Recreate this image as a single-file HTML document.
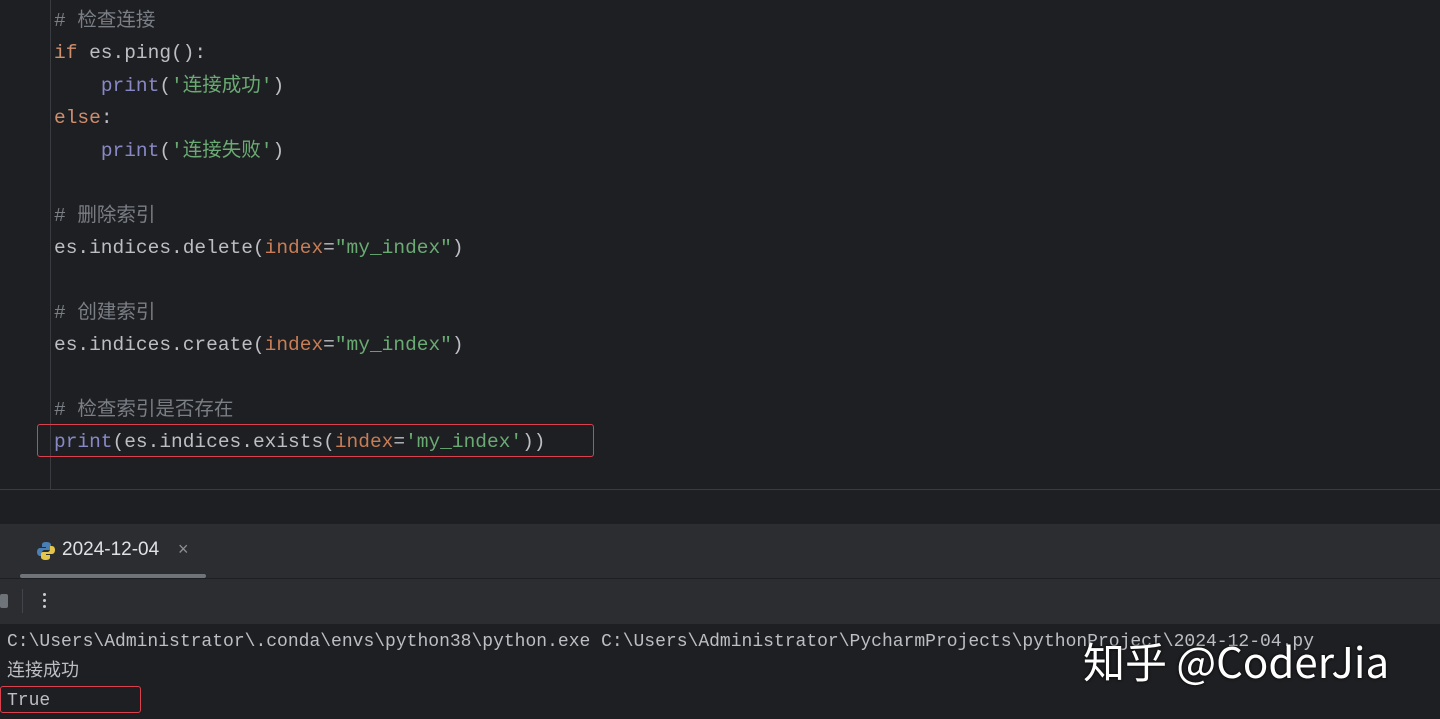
<!DOCTYPE html><html><head><meta charset="utf-8"><style>
body{margin:0;width:1440px;height:719px;overflow:hidden;background:#1e1f22;position:relative;font-family:"Liberation Mono","Noto Sans CJK SC",monospace;}
.ed{position:absolute;left:0;top:0;width:1440px;height:489px;background:#1e1f22;}
.gut{position:absolute;left:50px;top:0;width:1px;height:489px;background:#393b40;}
.l{position:absolute;left:54px;font-size:19.5px;color:#bcbec4;white-space:pre;line-height:24px;}
.c{color:#7a7e85}.k{color:#cf8e6d}.f{color:#8888c6}.s{color:#6aab73}.p{color:#c77d55}
.div{position:absolute;left:0;top:489px;width:1440px;height:1px;background:#393b40}
.hdr{position:absolute;left:0;top:524px;width:1440px;height:54px;background:#2b2d30}
.tb{position:absolute;left:0;top:578px;width:1440px;height:45px;background:#2b2d30;border-top:1px solid #1e1f22}
.con{position:absolute;left:7px;font-size:18px;color:#bcbec4;white-space:pre;line-height:22px}
.box{position:absolute;border:1.5px solid #d9414f;border-radius:3px}
</style></head><body>
<div class="ed"></div><div class="gut"></div>
<div class="l" style="top:9px"><span class="c"># 检查连接</span></div>
<div class="l" style="top:41px"><span class="k">if</span> es.ping():</div>
<div class="l" style="top:74px">    <span class="f">print</span>(<span class="s">'连接成功'</span>)</div>
<div class="l" style="top:106px"><span class="k">else</span>:</div>
<div class="l" style="top:139px">    <span class="f">print</span>(<span class="s">'连接失败'</span>)</div>
<div class="l" style="top:204px"><span class="c"># 删除索引</span></div>
<div class="l" style="top:236px">es.indices.delete(<span class="p">index</span>=<span class="s">"my_index"</span>)</div>
<div class="l" style="top:301px"><span class="c"># 创建索引</span></div>
<div class="l" style="top:333px">es.indices.create(<span class="p">index</span>=<span class="s">"my_index"</span>)</div>
<div class="l" style="top:398px"><span class="c"># 检查索引是否存在</span></div>
<div class="l" style="top:430px"><span class="f">print</span>(es.indices.exists(<span class="p">index</span>=<span class="s">'my_index'</span>))</div>
<div class="box" style="left:37px;top:424px;width:555px;height:31px"></div>
<div class="div"></div>
<div class="hdr">
<svg style="position:absolute;left:36px;top:17px" width="20" height="20" viewBox="0 0 20 20"><path d="M10 1c-4 0-4 2-4 3v2h4v1H4c-2 0-3 2-3 4s1 4 3 4h2v-3c0-2 1-3 3-3h4c1 0 2-1 2-2V4c0-2-2-3-5-3z" fill="#4a7fb5"/><path d="M10 19c4 0 4-2 4-3v-2h-4v-1h6c2 0 3-2 3-4s-1-4-3-4h-2v3c0 2-1 3-3 3H7c-1 0-2 1-2 2v3c0 2 2 3 5 3z" fill="#e4c54c"/></svg>
<div style="position:absolute;left:62px;top:15px;font-family:'Liberation Sans',sans-serif;font-size:19px;color:#dfe1e5">2024-12-04</div>
<div style="position:absolute;left:178px;top:15px;font-family:'Liberation Sans',sans-serif;font-size:18px;color:#8c8f94">×</div>
<div style="position:absolute;left:20px;top:50px;width:186px;height:4px;border-radius:2px;background:#6f737a"></div>
</div>
<div class="tb">
<div style="position:absolute;left:0;top:15px;width:8px;height:14px;background:#6f737a;border-radius:2px"></div>
<div style="position:absolute;left:22px;top:10px;width:1px;height:24px;background:#43454a"></div>
<div style="position:absolute;left:43px;top:14px;width:3px;height:3px;background:#ccc;border-radius:2px;box-shadow:0 6px #ccc,0 12px #ccc"></div>
</div>
<div class="con" style="top:631px">C:\Users\Administrator\.conda\envs\python38\python.exe C:\Users\Administrator\PycharmProjects\pythonProject\2024-12-04.py</div>
<div class="con" style="top:661px">连接成功</div>
<div class="con" style="top:690px">True</div>
<div class="box" style="left:0;top:686px;width:139px;height:25px"></div>
<div style="position:absolute;left:1083px;top:630px;font-family:'Noto Sans CJK SC',sans-serif;font-size:42px;color:#fff;text-shadow:0 0 3px #000">知乎 @CoderJia</div>
</body></html>
